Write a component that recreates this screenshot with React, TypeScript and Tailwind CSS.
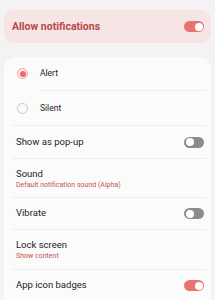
import type { ReactNode } from 'react'

function Toggle({ on }: { on: boolean }) {
  return (
    <div
      className={
        on
          ? 'flex h-[11px] w-[20px] items-center justify-end rounded-full bg-[#e7746f] px-[1.5px]'
          : 'flex h-[11px] w-[20px] items-center justify-start rounded-full bg-[#8d8b8d] px-[1.5px]'
      }
    >
      <div className="h-[8px] w-[8px] rounded-full bg-white" />
    </div>
  )
}

function Radio({ on }: { on: boolean }) {
  return (
    <div
      className={
        on
          ? 'flex h-[11px] w-[11px] items-center justify-center rounded-full border border-[#f0a09c] bg-[#fdeeed]'
          : 'flex h-[11px] w-[11px] items-center justify-center rounded-full border border-[#c9c7c9]'
      }
    >
      {on && <div className="h-[6px] w-[6px] rounded-full bg-[#e76e68]" />}
    </div>
  )
}

function Row({ children, divider = true, inset = false }: { children: ReactNode; divider?: boolean; inset?: boolean }) {
  return (
    <div>
      {children}
      {divider && (
        <div className={inset ? 'mr-[4px] ml-[36px] h-px bg-[#efedee]' : 'mr-[4px] ml-[8px] h-px bg-[#efedee]'} />
      )}
    </div>
  )
}

export default function App() {
  return (
    <div className="h-[300px] w-[215px] overflow-hidden bg-[#f4f2f3] px-[4px] pt-[10px] font-['Roboto',sans-serif] text-[#1d1b1d]">
      <div className="flex h-[33px] items-center justify-between rounded-[10px] bg-[#f7e4e4] pr-[7px] pl-[8px]">
        <span className="text-[10.5px] font-bold text-[#b94a48]">Allow notifications</span>
        <Toggle on />
      </div>

      <div className="mt-[14px] rounded-[12px] bg-[#fcfbfc] pb-[10px]">
        <Row inset>
          <div className="flex h-[33px] items-center pl-[13px]">
            <Radio on />
            <span className="ml-[12px] text-[8.5px]">Alert</span>
          </div>
        </Row>
        <Row>
          <div className="flex h-[34px] items-center pl-[13px]">
            <Radio on={false} />
            <span className="ml-[12px] text-[8.5px]">Silent</span>
          </div>
        </Row>
        <Row>
          <div className="flex h-[32px] items-center justify-between pr-[7px] pl-[12px]">
            <span className="text-[9.5px]">Show as pop-up</span>
            <Toggle on={false} />
          </div>
        </Row>
        <Row>
          <div className="flex h-[38px] flex-col justify-center pl-[12px]">
            <span className="text-[9.5px] leading-[13px]">Sound</span>
            <span className="text-[7px] leading-[10px] text-[#c0564e]">Default notification sound (Alpha)</span>
          </div>
        </Row>
        <Row>
          <div className="flex h-[31px] items-center justify-between pr-[7px] pl-[12px]">
            <span className="text-[9.5px]">Vibrate</span>
            <Toggle on={false} />
          </div>
        </Row>
        <Row>
          <div className="flex h-[39px] flex-col justify-center pl-[12px]">
            <span className="text-[9.5px] leading-[13px]">Lock screen</span>
            <span className="text-[7px] leading-[10px] text-[#c0564e]">Show content</span>
          </div>
        </Row>
        <Row divider={false}>
          <div className="flex h-[31px] items-center justify-between pr-[7px] pl-[12px]">
            <span className="text-[9.5px]">App icon badges</span>
            <Toggle on />
          </div>
        </Row>
      </div>
    </div>
  )
}
